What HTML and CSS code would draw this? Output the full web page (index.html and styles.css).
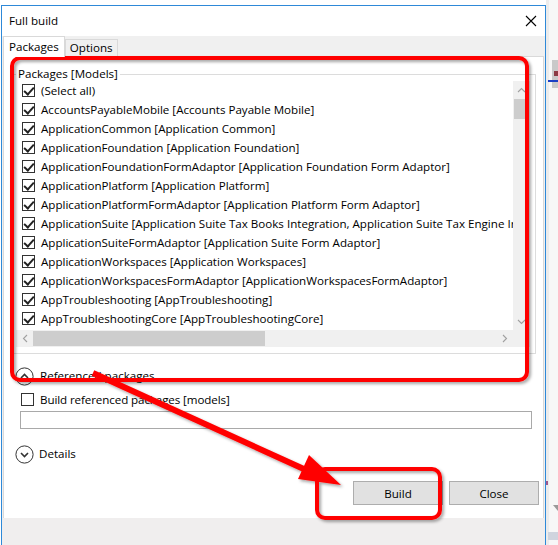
FILE: index.html
```html
<!DOCTYPE html>
<html>
<head>
<meta charset="utf-8">
<link rel="stylesheet" href="styles.css">
</head>
<body>
<div class="screen">
  <div class="window">
    <div class="titlebar">
      <span class="title">Full build</span>
      <svg class="close" width="12" height="12" viewBox="0 0 12 12"><path d="M1 1L11 11M11 1L1 11" stroke="#000" stroke-width="1.1" fill="none"/></svg>
    </div>
    <div class="tabs">
      <div class="tab active">Packages</div>
      <div class="tab">Options</div>
    </div>
    <div class="panel">
      <fieldset class="group">
        <legend>Packages [Models]</legend>
        <div class="listbox">
          <div class="list-main">
            <div class="items">
              <div class="row"><span class="cb on"></span><span class="lbl">(Select all)</span></div>
              <div class="row"><span class="cb on"></span><span class="lbl">AccountsPayableMobile [Accounts Payable Mobile]</span></div>
              <div class="row"><span class="cb on"></span><span class="lbl">ApplicationCommon [Application Common]</span></div>
              <div class="row"><span class="cb on"></span><span class="lbl">ApplicationFoundation [Application Foundation]</span></div>
              <div class="row"><span class="cb on"></span><span class="lbl">ApplicationFoundationFormAdaptor [Application Foundation Form Adaptor]</span></div>
              <div class="row"><span class="cb on"></span><span class="lbl">ApplicationPlatform [Application Platform]</span></div>
              <div class="row"><span class="cb on"></span><span class="lbl">ApplicationPlatformFormAdaptor [Application Platform Form Adaptor]</span></div>
              <div class="row"><span class="cb on"></span><span class="lbl">ApplicationSuite [Application Suite Tax Books Integration, Application Suite Tax Engine Integration]</span></div>
              <div class="row"><span class="cb on"></span><span class="lbl">ApplicationSuiteFormAdaptor [Application Suite Form Adaptor]</span></div>
              <div class="row"><span class="cb on"></span><span class="lbl">ApplicationWorkspaces [Application Workspaces]</span></div>
              <div class="row"><span class="cb on"></span><span class="lbl">ApplicationWorkspacesFormAdaptor [ApplicationWorkspacesFormAdaptor]</span></div>
              <div class="row"><span class="cb on"></span><span class="lbl">AppTroubleshooting [AppTroubleshooting]</span></div>
              <div class="row"><span class="cb on"></span><span class="lbl">AppTroubleshootingCore [AppTroubleshootingCore]</span></div>
            </div>
            <div class="vscroll">
              <div class="sbtn"><svg width="9" height="6" viewBox="0 0 9 6"><path d="M1 5L4.5 1.5L8 5" stroke="#a0a0a0" stroke-width="1.1" fill="none"/></svg></div>
              <div class="vthumb"></div>
              <div class="vtrack"></div>
              <div class="sbtn"><svg width="9" height="6" viewBox="0 0 9 6"><path d="M1 1L4.5 4.5L8 1" stroke="#a0a0a0" stroke-width="1.1" fill="none"/></svg></div>
            </div>
          </div>
          <div class="hscroll-row">
            <div class="hscroll">
              <div class="sbtn"><svg width="6" height="9" viewBox="0 0 6 9"><path d="M5 1L1.5 4.5L5 8" stroke="#a0a0a0" stroke-width="1.1" fill="none"/></svg></div>
              <div class="hthumb"></div>
              <div class="htrack"></div>
              <div class="sbtn"><svg width="6" height="9" viewBox="0 0 6 9"><path d="M1 1L4.5 4.5L1 8" stroke="#a0a0a0" stroke-width="1.1" fill="none"/></svg></div>
            </div>
            <div class="corner"></div>
          </div>
        </div>
      </fieldset>

      <div class="expander ref">
        <svg class="exp-icon" width="19" height="19" viewBox="0 0 19 19"><circle cx="9.5" cy="9.5" r="8.6" stroke="#333" stroke-width="1" fill="#fff"/><path d="M6 11L9.5 7.5L13 11" stroke="#333" stroke-width="1.6" fill="none"/></svg>
        <span>Referenced packages</span>
      </div>
      <div class="check-row">
        <span class="cb"></span><span class="lbl">Build referenced packages [models]</span>
      </div>
      <div class="textbox"></div>
      <div class="expander details">
        <svg class="exp-icon" width="19" height="19" viewBox="0 0 19 19"><circle cx="9.5" cy="9.5" r="8.6" stroke="#333" stroke-width="1" fill="#fff"/><path d="M6 8L9.5 11.5L13 8" stroke="#333" stroke-width="1.6" fill="none"/></svg>
        <span>Details</span>
      </div>
      <div class="buttons">
        <button class="btn">Build</button>
        <button class="btn">Close</button>
      </div>
    </div>
    <div class="footer"></div>
  </div>
  <div class="desk-right">
    <svg width="12" height="545" viewBox="0 0 12 545">
      <rect x="0" y="0" width="3" height="545" fill="#ececec"/>
      <rect x="6" y="60" width="6" height="28" fill="#c9c9c9"/>
      <rect x="8" y="71" width="4" height="5" fill="#8c3a44"/>
      <rect x="2" y="80" width="10" height="2" fill="#1c3fc4"/>
      <rect x="0" y="481" width="2" height="4" fill="#a0588c"/>
      <path d="M7 505L12 505L12 511Z" fill="#9a9a9a"/>
      <rect x="2" y="532" width="10" height="8" fill="#cfd4de"/>
    </svg>
  </div>

  <svg class="annot" width="558" height="545" viewBox="0 0 558 545">
    <defs>
      <filter id="sh" x="-10%" y="-10%" width="130%" height="130%">
        <feDropShadow dx="2" dy="2" stdDeviation="1.6" flood-color="#000" flood-opacity="0.35"/>
      </filter>
    </defs>
    <g filter="url(#sh)" fill="none" stroke="#ff0000">
      <rect x="12" y="58" width="515" height="322" rx="8" stroke-width="4"/>
      <rect x="317" y="469" width="123" height="49" rx="8" stroke-width="4"/>
      <line x1="93" y1="373" x2="306" y2="470" stroke-width="6"/>
      <polygon points="309,455 298,479 341,485" fill="#ff0000" stroke="none"/>
    </g>
  </svg>
</div>
</body>
</html>
```
FILE: styles.css
```css
* { box-sizing: border-box; }
html, body { margin: 0; padding: 0; background: #fff; }
body {
  font-family: "Segoe UI", "Open Sans", "Noto Sans", sans-serif;
  font-size: 11.6px;
  color: #000;
}
.screen {
  position: relative;
  width: 558px;
  height: 545px;
  overflow: hidden;
  display: flex;
  padding-left: 1px;
  background: #fff;
}
.window {
  width: 545px;
  margin-top: 5px;
  border: 1px solid #2e89d8;
  border-bottom: none;
  background: #f0f0f0;
  display: flex;
  flex-direction: column;
  flex-shrink: 0;
}
.titlebar {
  height: 30px;
  background: #fff;
  display: flex;
  align-items: center;
  justify-content: space-between;
  padding: 0 8px 0 7px;
}
.title { line-height: 16px; }
.tabs {
  height: 20px;
  display: flex;
  align-items: flex-end;
  padding-left: 1px;
  background: #f0f0f0;
}
.tab {
  height: 17px;
  border: 1px solid #d9d9d9;
  border-bottom: none;
  background: #f0f0f0;
  padding: 0 4px;
  line-height: 15px;
}
.tab.active {
  height: 21px;
  background: #fff;
  padding: 0 5px;
  line-height: 19px;
  margin-bottom: -1px;
  position: relative;
  z-index: 1;
}
.panel {
  height: 462px;
  margin: 0 1px;
  border: 1px solid #d9d9d9;
  border-bottom: none;
  background: #fff;
  display: flex;
  flex-direction: column;
}
.group {
  margin: 10px 0 0 9px;
  width: 523px;
  border: 1px solid #dcdcdc;
  padding: 0 4px 6px 2px;
  min-width: 0;
}
.group legend {
  padding: 0 2px;
  margin-left: 0;
  line-height: 14px;
}
.listbox {
  width: 514px;
  height: 266px;
  display: flex;
  flex-direction: column;
  background: #fff;
}
.list-main {
  height: 249px;
  display: flex;
}
.items {
  flex: 1;
  overflow: hidden;
  white-space: nowrap;
}
.row {
  height: 19px;
  display: flex;
  align-items: center;
  padding-left: 6px;
}
.cb {
  width: 13px;
  height: 13px;
  border: 1px solid #333;
  background: #fff;
  flex-shrink: 0;
  position: relative;
}
.cb.on::after {
  content: "";
  position: absolute;
  left: 3px;
  top: 0px;
  width: 4px;
  height: 8px;
  border-right: 2px solid #222;
  border-bottom: 2px solid #222;
  transform: rotate(42deg);
}
.lbl { margin-left: 6px; line-height: 16px; }
.vscroll {
  width: 17px;
  background: #f0f0f0;
  display: flex;
  flex-direction: column;
}
.sbtn {
  width: 17px;
  height: 17px;
  display: flex;
  align-items: center;
  justify-content: center;
  flex-shrink: 0;
}
.vthumb {
  height: 20px;
  margin: 1px 1px 0 1px;
  background: #cdcdcd;
}
.vtrack { flex: 1; }
.hscroll-row {
  height: 17px;
  display: flex;
}
.hscroll {
  flex: 1;
  display: flex;
  background: #f0f0f0;
}
.hthumb {
  width: 232px;
  margin: 1px 0;
  background: #cdcdcd;
}
.htrack { flex: 1; }
.corner { width: 17px; background: #f0f0f0; }

.expander {
  display: flex;
  align-items: center;
  height: 20px;
  padding-left: 11px;
}
.expander span { margin-left: 6px; line-height: 16px; }
.expander.ref { margin-top: 12px; }
.expander.details { margin-top: 15px; }
.expander.details span { margin-left: 5px; }
.check-row {
  display: flex;
  align-items: center;
  height: 19px;
  margin-top: 4px;
  padding-left: 17px;
}
.check-row .lbl { letter-spacing: -0.1px; }
.textbox {
  margin: 2px 0 0 16px;
  width: 512px;
  height: 18px;
  border: 1px solid #a9a9a9;
  background: #fff;
}
.buttons {
  display: flex;
  justify-content: flex-end;
  gap: 6px;
  margin-top: 17px;
  padding-right: 4px;
}
.btn {
  width: 90px;
  height: 24px;
  font: inherit;
  color: #000;
  background: #e1e1e1;
  border: 1px solid #adadad;
  padding: 0;
}
.footer {
  flex: 1;
  background: #f0eeee;
}
.desk-right {
  width: 12px;
  flex-shrink: 0;
  background: #f7f7f7;
}
.desk-right svg { display: block; }
.annot {
  position: absolute;
  left: 0;
  top: 0;
  pointer-events: none;
}
```
